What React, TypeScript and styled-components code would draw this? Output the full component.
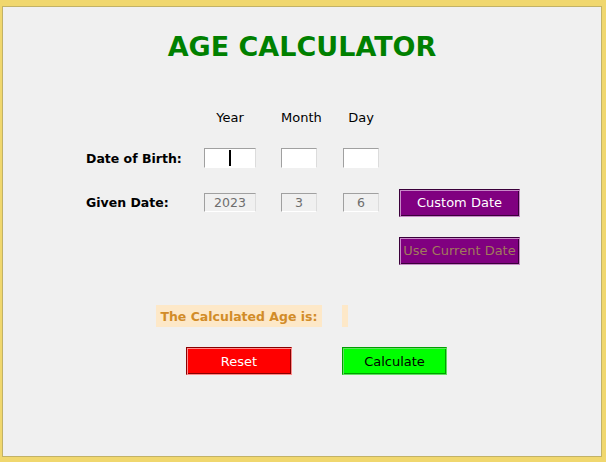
import React from "react";
import styled, { createGlobalStyle } from "styled-components";

const Global = createGlobalStyle`
  html, body { margin: 0; padding: 0; }
  body {
    background: #f0d76e;
    font-family: "DejaVu Sans", Verdana, sans-serif;
  }
`;

const Frame = styled.div`
  width: 606px;
  height: 462px;
  box-sizing: border-box;
  padding: 6px 4px 5px 2px;
  background: #f0d76e;
`;

const Panel = styled.main`
  height: 100%;
  box-sizing: border-box;
  background: #f0f0f0;
  border: 1px solid #c2b266;
  padding-top: 24px;
`;

const Title = styled.h1`
  margin: 0;
  text-align: center;
  font-size: 27px;
  line-height: 32px;
  font-weight: bold;
  color: #008000;
`;

const FormGrid = styled.div`
  display: grid;
  grid-template-columns: 118px 77px 62px 56px 121px;
  grid-template-rows: 20px 20px 27px 27px;
  row-gap: 21px;
  align-items: center;
  margin: 44px 0 0 83px;
`;

const ColHead = styled.div<{ $w: number }>`
  width: ${(p) => p.$w}px;
  text-align: center;
  font-size: 13px;
  color: #000;
`;

const RowLabel = styled.div`
  font-size: 12.5px;
  font-weight: bold;
  color: #000;
  white-space: nowrap;
`;

const Field = styled.div<{ $w: number; $disabled?: boolean }>`
  width: ${(p) => p.$w}px;
  height: ${(p) => (p.$disabled ? 19 : 20)}px;
  box-sizing: border-box;
  border: 1px solid;
  border-color: #a0a0a0 #dcdcdc #ffffff #a0a0a0;
  background: ${(p) => (p.$disabled ? "#f0f0f0" : "#ffffff")};
  color: #6d6d6d;
  font-size: 12.5px;
  display: flex;
  align-items: center;
  justify-content: center;
`;

const Caret = styled.span`
  display: block;
  width: 2px;
  height: 16px;
  background: #000;
`;

type BtnProps = { $w: number; $bg: string; $dark: string; $light: string; $fg: string };

const Button = styled.button<BtnProps>`
  width: ${(p) => p.$w}px;
  height: 28px;
  box-sizing: border-box;
  padding: 0;
  margin: 0;
  font-family: "DejaVu Sans", Verdana, sans-serif;
  font-size: 13px;
  white-space: nowrap;
  overflow: hidden;
  background: ${(p) => p.$bg};
  color: ${(p) => p.$fg};
  border: 1px solid;
  border-color: ${(p) => `${p.$dark} ${p.$light} ${p.$light} ${p.$dark}`};
  box-shadow: inset 1px 1px 0 ${(p) => p.$light}, inset -1px -1px 0 ${(p) => p.$dark};
  cursor: pointer;
`;

const ResultGrid = styled.div`
  display: grid;
  grid-template-columns: 206px 105px;
  grid-template-rows: 22px 28px;
  row-gap: 20px;
  align-items: center;
  margin: 41px 0 0 133px;
`;

const ResultLabel = styled.div`
  justify-self: center;
  width: 166px;
  height: 22px;
  box-sizing: border-box;
  background: #fde8c8;
  color: #d28c28;
  font-size: 12.5px;
  font-weight: bold;
  display: flex;
  align-items: center;
  justify-content: center;
  white-space: nowrap;
`;

const ResultValue = styled.div`
  justify-self: start;
  width: 6px;
  height: 22px;
  background: #fde8c8;
`;

const Centered = styled.div`
  justify-self: center;
  display: flex;
`;

const Empty = styled.div``;

export default function App() {
  return (
    <>
      <Global />
      <Frame>
        <Panel>
          <Title>AGE CALCULATOR</Title>
          <FormGrid>
            <Empty />
            <ColHead $w={52}>Year</ColHead>
            <ColHead $w={36}>Month</ColHead>
            <ColHead $w={36}>Day</ColHead>
            <Empty />

            <RowLabel>Date of Birth:</RowLabel>
            <Field $w={52}>
              <Caret />
            </Field>
            <Field $w={36} />
            <Field $w={36} />
            <Empty />

            <RowLabel>Given Date:</RowLabel>
            <Field $w={52} $disabled>2023</Field>
            <Field $w={36} $disabled>3</Field>
            <Field $w={36} $disabled>6</Field>
            <Button $w={121} $bg="#800080" $dark="#3a003a" $light="#c88ac8" $fg="#ffffff">
              Custom Date
            </Button>

            <Empty />
            <Empty />
            <Empty />
            <Empty />
            <Button $w={121} $bg="#800080" $dark="#3a003a" $light="#c88ac8" $fg="#a07a5c">
              Use Current Date
            </Button>
          </FormGrid>
          <ResultGrid>
            <ResultLabel>The Calculated Age is:</ResultLabel>
            <ResultValue />
            <Centered>
              <Button $w={106} $bg="#ff0000" $dark="#8a0000" $light="#ff8c8c" $fg="#ffffff">
                Reset
              </Button>
            </Centered>
            <Button $w={105} $bg="#00ff00" $dark="#00a000" $light="#60e060" $fg="#000000">
              Calculate
            </Button>
          </ResultGrid>
        </Panel>
      </Frame>
    </>
  );
}
